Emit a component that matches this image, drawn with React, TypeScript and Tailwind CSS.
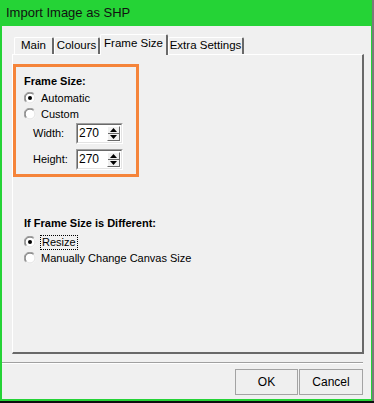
import React from 'react';

const TABS = [
  { label: 'Main', w: 'w-[40px]' },
  { label: 'Colours', w: 'w-[46px]' },
  { label: 'Frame Size', w: 'w-[68px]', active: true },
  { label: 'Extra Settings', w: 'w-[76px]' },
];

function Radio({ checked }: { checked?: boolean }) {
  return (
    <svg width="12" height="12" viewBox="0 0 12 12" className="shrink-0">
      <circle cx="6" cy="6" r="5.5" fill="#fff" />
      {/* sunken rings */}
      <path d="M1.8 10.2 A5.5 5.5 0 0 1 10.2 1.8" fill="none" stroke="#a0a0a0" strokeWidth="1" />
      <path d="M10.2 1.8 A5.5 5.5 0 0 1 1.8 10.2" fill="none" stroke="#f4f4f4" strokeWidth="1" />
      <path d="M2.5 9.5 A4.6 4.6 0 0 1 9.5 2.5" fill="none" stroke="#696969" strokeWidth="1" />
      <path d="M9.5 2.5 A4.6 4.6 0 0 1 2.5 9.5" fill="none" stroke="#e3e3e3" strokeWidth="1" />
      {checked && <circle cx="6" cy="6" r="2" fill="#000" />}
    </svg>
  );
}

function SpinField({ value }: { value: string }) {
  return (
    <div className="w-[47px] h-[21px] border border-t-[#a0a0a0] border-l-[#a0a0a0] border-r-white border-b-white">
      <div className="h-full border border-t-[#696969] border-l-[#696969] border-r-[#e3e3e3] border-b-[#e3e3e3] bg-white flex items-center justify-between pl-[1px] pr-[1px]">
        <span className="text-[12px] leading-[13px] text-black">{value}</span>
        <div className="w-[13px] h-[15px] bg-[#f0f0f0] border border-t-white border-l-white border-r-[#696969] border-b-[#696969] flex flex-col">
          <div className="flex-1 flex items-center justify-center">
            <svg width="7" height="4" viewBox="0 0 7 4"><path d="M3.5 0 L7 4 L0 4 Z" fill="#000" /></svg>
          </div>
          <div className="h-px bg-[#696969]" />
          <div className="flex-1 flex items-center justify-center">
            <svg width="7" height="4" viewBox="0 0 7 4"><path d="M0 0 L7 0 L3.5 4 Z" fill="#000" /></svg>
          </div>
        </div>
      </div>
    </div>
  );
}

export default function App() {
  return (
    <div className="w-[374px] h-[403px] bg-[#0e0e0e] flex font-['Liberation_Sans',Arial,sans-serif] text-[11px] text-black">
      <div className="w-[372px] h-[401px] bg-[#25d336] pl-[2px] pr-[1px] pb-[2px] flex flex-col">
        {/* title bar */}
        <div className="h-[26px] flex items-center pl-[4px] text-[13px] text-[#111]">Import Image as SHP</div>

        <div className="flex-1 bg-[#f0f0f0] flex flex-col">
          {/* tabs */}
          <div className="mt-[8px] ml-[12px] h-[20px] flex items-end relative z-10">
            {TABS.map((t) =>
              t.active ? (
                <div
                  key={t.label}
                  className={`${t.w} h-[21px] -mb-px bg-[#f0f0f0] border-l border-t border-white border-r-2 border-r-[#696969] rounded-t-[2px] flex items-center justify-center pb-[2px] text-[11.5px] whitespace-nowrap`}
                >
                  {t.label}
                </div>
              ) : (
                <div
                  key={t.label}
                  className={`${t.w} h-[17px] bg-[#f0f0f0] border-l border-t border-white border-r-2 border-r-[#696969] rounded-t-[2px] flex items-center justify-center text-[11.5px] whitespace-nowrap`}
                >
                  {t.label}
                </div>
              ),
            )}
          </div>

          {/* tab panel */}
          <div className="ml-[10px] w-[352px] h-[300px] border-l border-t border-white border-r-2 border-b-2 border-r-[#696969] border-b-[#696969]">
            <div className="mt-[9px] w-[126px] h-[113px] border-[3px] border-[#f5843a] pl-[8px] pt-[8px]">
              <div className="font-bold leading-[13px]">Frame Size:</div>
              <div className="mt-[2px] h-[16px] flex items-center gap-[5px]">
                <Radio checked />
                <span className="leading-[13px]">Automatic</span>
              </div>
              <div className="h-[16px] flex items-center gap-[5px]">
                <Radio />
                <span className="leading-[13px]">Custom</span>
              </div>
              <div className="mt-px flex items-center pl-[9px]">
                <span className="w-[43px] leading-[13px]">Width:</span>
                <SpinField value="270" />
              </div>
              <div className="mt-[5px] flex items-center pl-[9px]">
                <span className="w-[43px] leading-[13px]">Height:</span>
                <SpinField value="270" />
              </div>
            </div>

            <div className="mt-[40px] pl-[11px]">
              <div className="font-bold leading-[13px]">If Frame Size is Different:</div>
              <div className="mt-[4px] h-[16px] flex items-center gap-[4px]">
                <Radio checked />
                <span className="leading-[13px] border border-dotted border-black px-px">Resize</span>
              </div>
              <div className="h-[16px] flex items-center gap-[5px]">
                <Radio />
                <span className="leading-[13px]">Manually Change Canvas Size</span>
              </div>
            </div>
          </div>

          {/* separator */}
          <div className="mt-[8px] mr-[8px] h-[2px] border-t border-t-[#a0a0a0] border-b border-b-white" />

          {/* buttons */}
          <div className="mt-[5px] flex justify-end gap-px pr-[8px]">
            <button className="w-[63px] h-[26px] bg-[#efefef] border border-[#a3a3a3] text-[12px] text-black">OK</button>
            <button className="w-[64px] h-[26px] bg-[#efefef] border border-[#a3a3a3] text-[12px] text-black">Cancel</button>
          </div>
        </div>
      </div>
      <div className="w-[2px] h-[401px] bg-[#7a7a7a]" />
    </div>
  );
}
